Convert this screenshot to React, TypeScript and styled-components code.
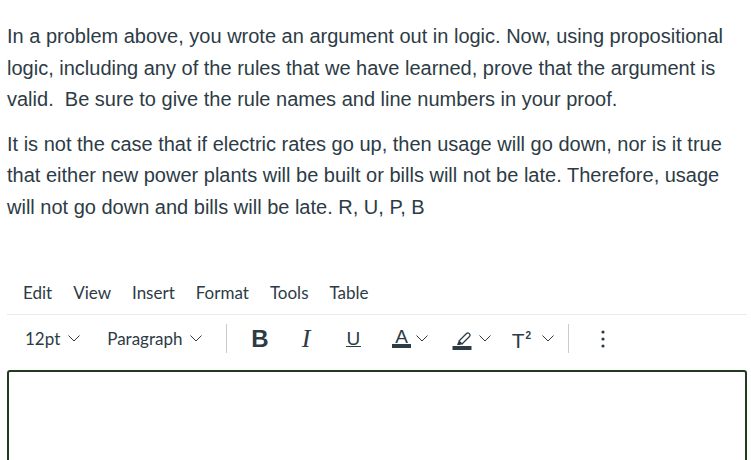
import React, { ReactElement } from 'react'
import styled, { createGlobalStyle } from 'styled-components'

const GlobalStyle = createGlobalStyle`
  html, body {
    margin: 0;
    padding: 0;
    background: #ffffff;
  }
  body {
    font-family: 'Liberation Sans', Arial, sans-serif;
    color: #2d3b45;
  }
`

const Page = styled.div`
  padding: 21px 4px 0 7px;
  overflow: hidden;
  height: 460px;
  box-sizing: border-box;
`

const Question = styled.p`
  margin: 0 0 13px;
  font-size: 20px;
  line-height: 31.5px;
  color: #2d3b45;
`

const Editor = styled.div`
  margin-top: 50px;
  font-family: Lato, 'Open Sans', sans-serif;
  color: #2d3b45;
`

const Menubar = styled.div`
  display: flex;
  gap: 21px;
  padding: 8px 0 9px 16px;
  border-bottom: 1px solid #e8eaec;
`

const MenuItem = styled.span`
  font-size: 17px;
  line-height: 24px;
`

const Toolbar = styled.div`
  display: flex;
  align-items: center;
  padding: 9px 0 17px 18px;
`

const Group = styled.div<{ $gap: number; $padLeft?: number; $padRight?: number }>`
  display: flex;
  align-items: center;
  gap: ${p => p.$gap}px;
  padding-left: ${p => p.$padLeft ?? 0}px;
  padding-right: ${p => p.$padRight ?? 0}px;
`

const Dropdown = styled.div`
  display: flex;
  align-items: center;
  gap: 8px;
  font-size: 17px;
  line-height: 24px;
`

const Divider = styled.div`
  width: 1px;
  height: 29px;
  background: #c7cdd1;
`

const Split = styled.div`
  display: flex;
  align-items: center;
  gap: 5px;
`

const IconBox = styled.div`
  width: 24px;
  height: 24px;
  display: flex;
  align-items: center;
  justify-content: center;
  color: #2d3b45;
`

const BoldGlyph = styled.span`
  font-family: 'Liberation Sans', sans-serif;
  font-weight: 700;
  font-size: 24px;
  line-height: 24px;
  margin-left: -3px;
`

const ItalicGlyph = styled.span`
  font-family: 'Liberation Serif', serif;
  font-style: italic;
  font-size: 26px;
  line-height: 24px;
  margin-left: -3px;
`

const UnderGlyph = styled.span`
  font-family: 'Liberation Sans', sans-serif;
  font-size: 19px;
  line-height: 15px;
  padding: 0 1px;
  border-bottom: 1px solid #2d3b45;
`

const ColorGlyph = styled.span`
  display: flex;
  flex-direction: column;
  align-items: center;
  font-family: 'Liberation Sans', sans-serif;
  font-size: 19px;
  line-height: 15px;
  margin-left: 4px;
`

const ColorBar = styled.span`
  display: block;
  width: 19px;
  height: 4px;
  background: #2d3b45;
`

const SuperGlyph = styled.span`
  font-family: 'Liberation Sans', sans-serif;
  font-size: 21px;
  line-height: 20px;
  margin-top: 4px;
  margin-left: -8px;

  sup {
    font-size: 10px;
    font-weight: 700;
    vertical-align: 9px;
    line-height: 0;
    margin-left: 1px;
  }
`

const Box = styled.div`
  height: 200px;
  border: 2px solid #213b21;
  border-radius: 3px;
`

const Chevron = (): ReactElement => (
  <svg width='12' height='7' viewBox='0 0 12 7' fill='none'>
    <polyline points='0.5,0.5 6,6 11.5,0.5' stroke='#2d3b45' strokeWidth='1' />
  </svg>
)

const Highlighter = (): ReactElement => (
  <svg width='22' height='22' viewBox='0 0 22 22' fill='none'>
    <path
      d='M8 13 L15.5 5.5 Q16.8 4.2 18 5.4 L18.6 6 Q19.8 7.2 18.5 8.5 L11 16 Z'
      stroke='#2d3b45'
      strokeWidth='1.3'
      strokeLinejoin='round'
    />
    <path d='M8 13 L11 16 L9 17 L6 17 L7 14.5 Z' fill='#2d3b45' />
    <rect x='1.5' y='18' width='19' height='4' fill='#2d3b45' />
  </svg>
)

const MoreDots = (): ReactElement => (
  <svg width='6' height='20' viewBox='0 0 6 20'>
    <circle cx='3' cy='3' r='1.6' fill='#2d3b45' />
    <circle cx='3' cy='10' r='1.6' fill='#2d3b45' />
    <circle cx='3' cy='17' r='1.6' fill='#2d3b45' />
  </svg>
)

const menus = ['Edit', 'View', 'Insert', 'Format', 'Tools', 'Table']

const App = (): ReactElement => (
  <Page>
    <GlobalStyle />
    <Question>
      In a problem above, you wrote an argument out in logic. Now, using propositional logic, including any of the
      rules that we have learned, prove that the argument is valid.{'\u00a0'} Be sure to give the rule names and line
      numbers in your proof.
    </Question>
    <Question>
      It is not the case that if electric rates go up, then usage will go down, nor is it true that either new power
      plants will be built or bills will not be late. Therefore, usage will not go down and bills will be late. R, U, P, B
    </Question>

    <Editor>
      <Menubar>
        {menus.map(m => (
          <MenuItem key={m}>{m}</MenuItem>
        ))}
      </Menubar>

      <Toolbar>
        <Group $gap={27} $padRight={24}>
          <Dropdown>
            12pt <Chevron />
          </Dropdown>
          <Dropdown>
            Paragraph <Chevron />
          </Dropdown>
        </Group>
        <Divider />
        <Group $gap={22} $padLeft={22} $padRight={14}>
          <IconBox>
            <BoldGlyph>B</BoldGlyph>
          </IconBox>
          <IconBox>
            <ItalicGlyph>I</ItalicGlyph>
          </IconBox>
          <IconBox>
            <UnderGlyph>U</UnderGlyph>
          </IconBox>
          <Split>
            <IconBox>
              <ColorGlyph>
                A
                <ColorBar />
              </ColorGlyph>
            </IconBox>
            <Chevron />
          </Split>
          <Split>
            <IconBox>
              <Highlighter />
            </IconBox>
            <Chevron />
          </Split>
          <Split>
            <IconBox>
              <SuperGlyph>
                T<sup>2</sup>
              </SuperGlyph>
            </IconBox>
            <Chevron />
          </Split>
        </Group>
        <Divider />
        <Group $gap={0} $padLeft={22}>
          <IconBox>
            <MoreDots />
          </IconBox>
        </Group>
      </Toolbar>

      <Box />
    </Editor>
  </Page>
)

export default App
